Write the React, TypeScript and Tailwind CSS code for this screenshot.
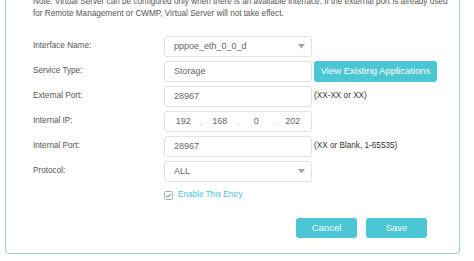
import React from "react";

const font = { fontFamily: '"Liberation Sans", Arial, sans-serif' };

function Arrow() {
  return (
    <svg className="absolute right-[6px] top-[7px]" width="7" height="5" viewBox="0 0 7 5">
      <path d="M0 0 L7 0 L3.5 4.5 Z" fill="#a3a3a3" />
    </svg>
  );
}

function Box({ children, arrow }: { children?: React.ReactNode; arrow?: boolean }) {
  return (
    <div className="relative w-[148px] h-[21px] border border-[#e2e2e2] rounded-[3px] bg-white flex items-center pl-[9px] text-[9px] text-[#666]">
      {children}
      {arrow && <Arrow />}
    </div>
  );
}

function Row({ label, children }: { label: string; children: React.ReactNode }) {
  return (
    <div className="flex items-center h-[21px]">
      <div className="w-[131px] text-[8.2px] text-[#555] whitespace-nowrap">{label}</div>
      {children}
    </div>
  );
}

function Hint({ children }: { children: React.ReactNode }) {
  return <div className="ml-[2px] text-[8.2px] text-[#333] whitespace-nowrap">{children}</div>;
}

export default function App() {
  const ip = ["192", "168", "0", "202"];
  return (
    <div className="w-[474px] h-[261px] overflow-hidden bg-white" style={font}>
      <div className="ml-[5px] w-[455px] h-[258px] -mt-[4px] border-[1.5px] border-t-0 border-[#97d5db] rounded-b-[4px] pl-[27px]">
        <p className="text-[8.2px] leading-[12px] text-[#555] whitespace-nowrap">
          Note: Virtual Server can be configured only when there is an available interface. If the external port is already used
          <br />
          for Remote Management or CWMP, Virtual Server will not take effect.
        </p>
        <div className="mt-[16px] flex flex-col gap-[4px]">
          <Row label="Interface Name:">
            <Box arrow>pppoe_eth_0_0_d</Box>
          </Row>
          <Row label="Service Type:">
            <Box>Storage</Box>
            <div className="ml-[2px] h-[21px] w-[123px] rounded-[3px] bg-[#4bc6d4] text-white text-[9.5px] flex items-center justify-center whitespace-nowrap">
              View Existing Applications
            </div>
          </Row>
          <Row label="External Port:">
            <Box>28967</Box>
            <Hint>(XX-XX or XX)</Hint>
          </Row>
          <Row label="Internal IP:">
            <div className="w-[148px] h-[21px] border border-[#e2e2e2] rounded-[3px] bg-white flex items-center text-[9px] text-[#666]">
              {ip.map((v, i) => (
                <React.Fragment key={i}>
                  {i > 0 && (
                    <div className="w-0 flex justify-center text-[#aaa] pt-[2px]">.</div>
                  )}
                  <div className="flex-1 text-center">{v}</div>
                </React.Fragment>
              ))}
            </div>
          </Row>
          <Row label="Internal Port:">
            <Box>28967</Box>
            <Hint>(XX or Blank, 1-65535)</Hint>
          </Row>
          <Row label="Protocol:">
            <Box arrow>ALL</Box>
          </Row>
        </div>
        <div className="mt-[7px] h-[12px] pl-[131px] flex items-center">
          <svg width="9" height="9" viewBox="0 0 9 9" className="shrink-0">
            <rect x="0.5" y="0.5" width="8" height="8" rx="1" fill="white" stroke="#9fb0b6" />
            <path d="M2.2 4.6 L3.8 6.1 L6.8 2.9" fill="none" stroke="#5d6d74" strokeWidth="1" />
          </svg>
          <span className="ml-[5px] text-[8.2px] text-[#4bc6d4] whitespace-nowrap">Enable This Entry</span>
        </div>
        <div className="mt-[17px] mr-[32px] flex justify-end gap-[9px]">
          <div className="w-[61px] h-[20px] rounded-[3px] bg-[#4bc6d4] text-white text-[9.5px] flex items-center justify-center">
            Cancel
          </div>
          <div className="w-[61px] h-[20px] rounded-[3px] bg-[#4bc6d4] text-white text-[9.5px] flex items-center justify-center">
            Save
          </div>
        </div>
      </div>
    </div>
  );
}
